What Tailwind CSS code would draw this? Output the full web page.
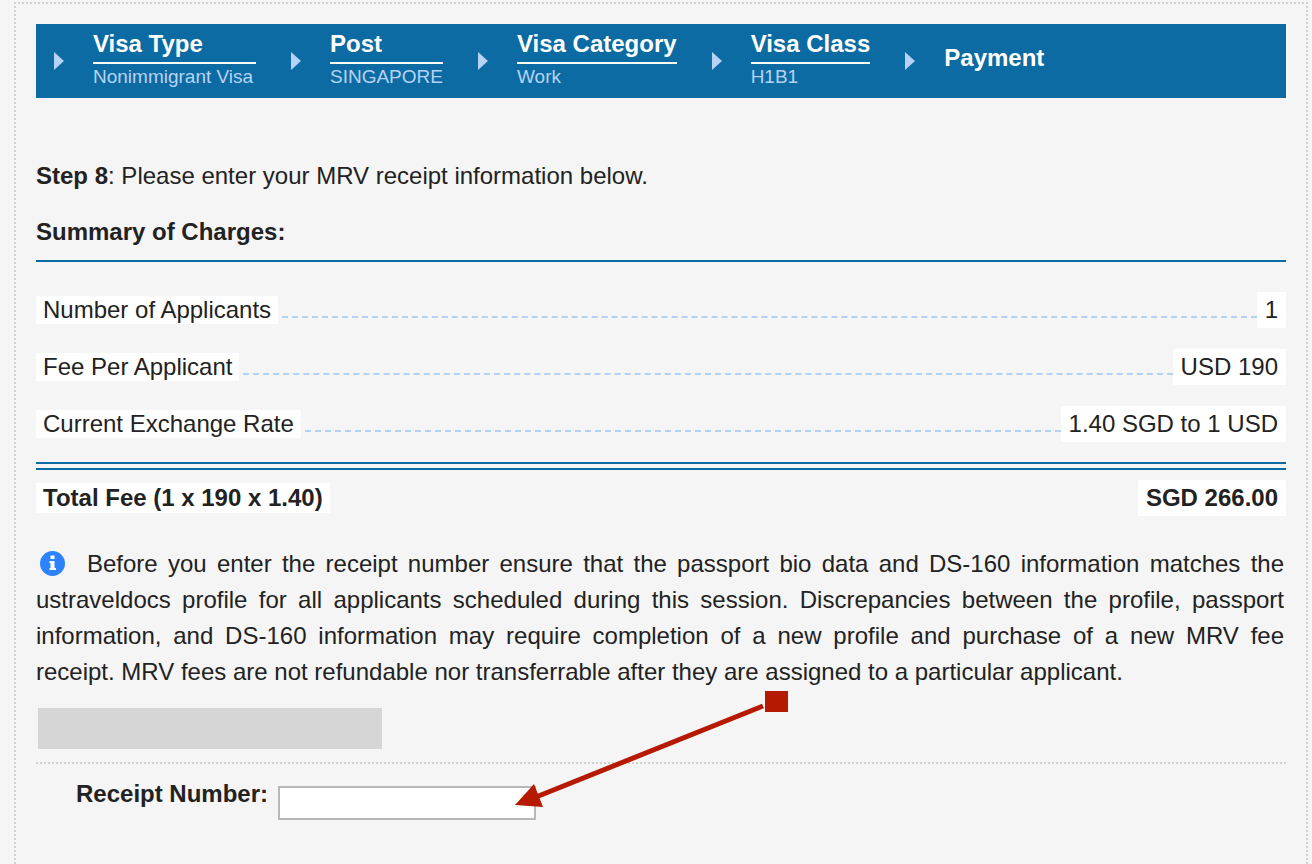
<!DOCTYPE html>
<html lang="en">
<head>
<meta charset="utf-8">
<meta name="viewport" content="width=device-width, initial-scale=1">
<title>Visa Payment</title>
<script src="https://cdn.jsdelivr.net/npm/@tailwindcss/browser@4"></script>
</head>
<body class="bg-[#f5f5f5] font-['Liberation_Sans',Arial,sans-serif] text-2xl/9 text-[#222]">
<main class="relative mt-0.5 mr-1 ml-3.5 min-h-[calc(100vh-2px)] border-2 border-b-0 border-dotted border-[#d0d0d0] px-5 pt-5 pb-11">

  <!-- Application progress -->
  <nav aria-label="Progress" class="bg-[#0c6ba2] pt-1.5 pb-2 pl-[18px]">
    <ol class="flex gap-[35px] text-[19px]/[26px] text-[#b6d3f5]">
      <li class="flex gap-[29px]">
        <svg class="mt-[22px] h-[18px] w-2.5 shrink-0" viewBox="0 0 10 18" fill="currentColor" aria-hidden="true"><path d="M0 0 L10 9 L0 18 Z"/></svg>
        <div class="min-w-[163px]"><strong class="block border-b-2 border-white pb-1 text-2xl/7 text-white">Visa Type</strong>Nonimmigrant Visa</div>
      </li>
      <li class="flex gap-[29px]">
        <svg class="mt-[22px] h-[18px] w-2.5 shrink-0" viewBox="0 0 10 18" fill="currentColor" aria-hidden="true"><path d="M0 0 L10 9 L0 18 Z"/></svg>
        <div class="min-w-[110px]"><strong class="block border-b-2 border-white pb-1 text-2xl/7 text-white">Post</strong>SINGAPORE</div>
      </li>
      <li class="flex gap-[29px]">
        <svg class="mt-[22px] h-[18px] w-2.5 shrink-0" viewBox="0 0 10 18" fill="currentColor" aria-hidden="true"><path d="M0 0 L10 9 L0 18 Z"/></svg>
        <div class="min-w-[159px]"><strong class="block border-b-2 border-white pb-1 text-2xl/7 text-white">Visa Category</strong>Work</div>
      </li>
      <li class="flex gap-[29px]">
        <svg class="mt-[22px] h-[18px] w-2.5 shrink-0" viewBox="0 0 10 18" fill="currentColor" aria-hidden="true"><path d="M0 0 L10 9 L0 18 Z"/></svg>
        <div class="min-w-[118px]"><strong class="block border-b-2 border-white pb-1 text-2xl/7 text-white">Visa Class</strong>H1B1</div>
      </li>
      <li class="flex gap-[29px]" aria-current="step">
        <svg class="mt-[22px] h-[18px] w-2.5 shrink-0" viewBox="0 0 10 18" fill="currentColor" aria-hidden="true"><path d="M0 0 L10 9 L0 18 Z"/></svg>
        <strong class="pt-3.5 text-2xl/7 text-white">Payment</strong>
      </li>
    </ol>
  </nav>

  <p class="mt-[60px]"><strong>Step 8</strong>: Please enter your MRV receipt information below.</p>
  <h1 class="mt-5 border-b-2 border-[#0c6ba2] pb-2.5 font-bold">Summary of Charges:</h1>

  <dl class="mt-[30px] flex flex-col gap-[21px]">
    <div class="flex items-center">
      <dt class="bg-white px-[7px] text-2xl/7">Number of Applicants</dt>
      <dd class="flex grow items-center"><span class="mt-3.5 ml-1 grow border-t-2 border-dashed border-[#b3d1f2]"></span><span class="bg-white px-2">1</span></dd>
    </div>
    <div class="flex items-center">
      <dt class="bg-white px-[7px] text-2xl/7">Fee Per Applicant</dt>
      <dd class="flex grow items-center"><span class="mt-3.5 ml-1 grow border-t-2 border-dashed border-[#b3d1f2]"></span><span class="bg-white px-2">USD 190</span></dd>
    </div>
    <div class="flex items-center">
      <dt class="bg-white px-[7px] text-2xl/7">Current Exchange Rate</dt>
      <dd class="flex grow items-center"><span class="mt-3.5 ml-1 grow border-t-2 border-dashed border-[#b3d1f2]"></span><span class="bg-white px-2">1.40 SGD to 1 USD</span></dd>
    </div>
  </dl>
  <div class="mt-5 h-2 border-y-2 border-[#0c6ba2]"></div>
  <dl class="mt-2.5 font-bold">
    <div class="flex items-center justify-between">
      <dt class="bg-white px-[7px] text-2xl/[30px]">Total Fee (1 x 190 x 1.40)</dt>
      <dd class="bg-white px-2">SGD 266.00</dd>
    </div>
  </dl>

  <p class="mt-[30px] pr-0.5 text-justify">
    <svg class="mr-[22px] ml-1 inline-block size-[25px] align-[-4px]" viewBox="0 0 25 25" role="img" aria-label="Information"><circle cx="12.5" cy="12.5" r="12.5" fill="#2d82ff"/><path fill="#fff" d="M10.5 4.5h4v3.5h-4zM9.5 10h5v7h1.5v2H9.5v-2h1v-5h-1z"/></svg>Before you enter the receipt number ensure that the passport bio data and DS-160 information matches the ustraveldocs profile for all applicants scheduled during this session. Discrepancies between the profile, passport information, and DS-160 information may require completion of a new profile and purchase of a new MRV fee receipt.&nbsp;MRV fees are not refundable nor transferrable after they are assigned to a particular applicant.
  </p>

  <div class="mt-[18px] ml-0.5 h-[41px] w-[344px] bg-[#d6d6d6]"></div>

  <form class="mt-[13px] flex items-start gap-2.5 border-t-2 border-dotted border-[#d0d0d0] pt-3 pl-10">
    <label for="receipt" class="font-bold">Receipt Number:</label>
    <input id="receipt" type="text" class="mt-2.5 h-[34px] w-[258px] border-2 border-[#b8b8b8] bg-white px-2 text-xl outline-none">
  </form>

  <!-- Callout arrow pointing at the receipt field -->
  <svg class="pointer-events-none absolute top-[687px] left-[498px] h-[120px] w-[280px]" viewBox="514 691 280 120" fill="#b51a00" aria-hidden="true">
    <path d="M765 691h23v21h-23z"/>
    <path d="M763 706 L536 797" stroke="#b51a00" stroke-width="5"/>
    <path d="M515 805 L534 784 L543 807 Z"/>
  </svg>
</main>
</body>
</html>
